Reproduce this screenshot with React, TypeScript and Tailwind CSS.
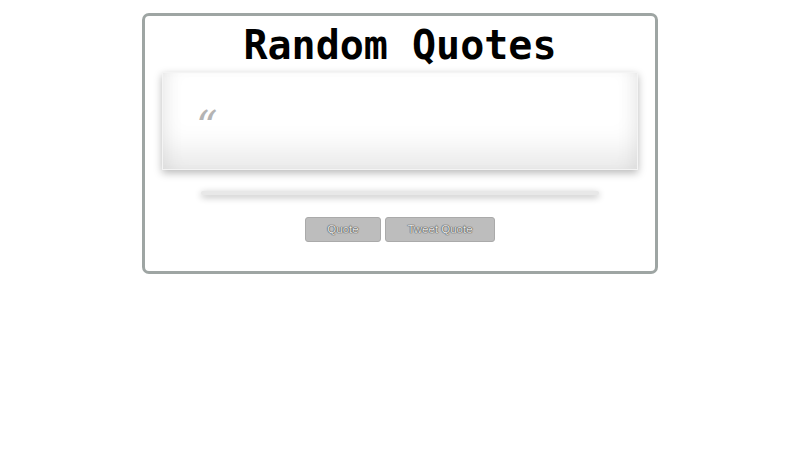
import React from "react";

const QuoteBox = ({ text }: { text: string }) => {
  return (
    <div className="mx-[17px] h-[98px] bg-white border border-[#f4f4f4] shadow-[0_3px_8px_rgba(0,0,0,0.28),inset_0_-28px_30px_-10px_rgba(0,0,0,0.09),inset_14px_0_20px_-12px_rgba(0,0,0,0.08),inset_-14px_0_20px_-12px_rgba(0,0,0,0.08)] flex items-start px-[33px] pt-[36px]">
      <span className="font-['DejaVu_Serif',serif] italic text-[42px] leading-[36px] text-[#b4b4b4]">&ldquo;</span>
      <span className="font-['Liberation_Serif',serif] italic text-lg text-[#555] pl-2">{text}</span>
    </div>
  );
};

const App = () => {
  const quote = "";

  return (
    <div className="w-[800px] h-[450px] bg-white pt-[13px]">
      <div className="mx-auto w-[516px] border-[3px] border-[#9ea5a3] rounded-[7px] pb-[29px]">
        <h1 className="text-center font-['DejaVu_Sans_Mono',monospace] font-bold text-[40px] pt-[3px] leading-[53px] text-black">
          Random Quotes
        </h1>
        <QuoteBox text={quote} />
        <div className="mx-[56px] mt-[21px] h-[4px] rounded-full bg-[#e8e8e8] shadow-[0_2px_7px_rgba(0,0,0,0.32)]"></div>
        <div className="flex justify-center gap-[4px] mt-[22px]">
          <button className="w-[76px] h-[25px] bg-[#bdbdbd] border border-[#aaa] rounded-[3px] font-['Liberation_Sans',sans-serif] text-[11.5px] text-[#e6e6e6] [text-shadow:0_0_1px_#333,0_0_1px_#333]">
            Quote
          </button>
          <button className="w-[110px] h-[25px] bg-[#bdbdbd] border border-[#aaa] rounded-[3px] font-['Liberation_Sans',sans-serif] text-[11.5px] text-[#e6e6e6] [text-shadow:0_0_1px_#333,0_0_1px_#333]">
            Tweet Quote
          </button>
        </div>
      </div>
    </div>
  );
};

export default App;
